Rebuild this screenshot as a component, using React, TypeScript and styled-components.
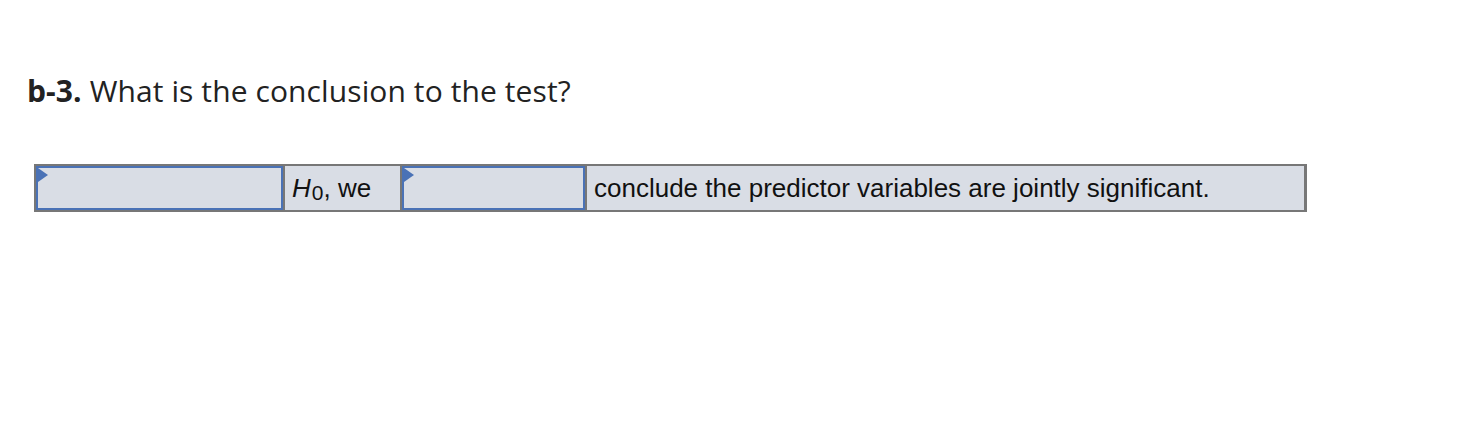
import React from "react";
import styled, { createGlobalStyle } from "styled-components";

const GlobalStyle = createGlobalStyle`
    html, body {
        margin: 0;
        padding: 0;
        background: #ffffff;
    }
`;

const Page = styled.div`
    padding: 73px 0 0 27px;
    font-family: "Open Sans", "Lato", sans-serif;
    color: #222222;
`;

const Question = styled.h2`
    margin: 0;
    font-size: 30px;
    font-weight: 400;
    line-height: 36px;
    letter-spacing: 0.1px;
`;

const Label = styled.strong`
    font-weight: 700;
`;

const Row = styled.div`
    display: flex;
    box-sizing: border-box;
    width: 1273px;
    height: 48px;
    margin: 55px 0 0 7px;
    border: 2px solid #777777;
    border-right-width: 3px;
    background: #d9dde5;
    font-family: "Liberation Sans", Arial, sans-serif;
    font-size: 26px;
    color: #111111;
`;

const SelectCell = styled.div<{ w: number }>`
    position: relative;
    box-sizing: border-box;
    width: ${({ w }) => w}px;
    flex: none;
    border: 2px solid #4a72b6;
    background: #d9dde5;

    &::before {
        content: "";
        position: absolute;
        left: 0;
        top: 0;
        width: 0;
        height: 0;
        border-top: 7px solid transparent;
        border-bottom: 7px solid transparent;
        border-left: 10px solid #4a72b6;
    }
`;

const TextCell = styled.div<{ w?: number }>`
    box-sizing: border-box;
    display: flex;
    align-items: center;
    padding: 0 0 0 7px;
    ${({ w }) => (w ? `width: ${w}px; flex: none;` : "flex: 1;")}
    border-left: 2px solid #777777;
    border-right: ${({ w }) => (w ? "2px solid #777777" : "none")};
    white-space: nowrap;
    line-height: 1;
`;

const Hyp = styled.span`
    font-style: italic;
`;

const Sub = styled.span`
    font-style: normal;
    font-size: 21px;
    position: relative;
    top: 4px;
    margin-left: 1px;
`;

export default function App() {
    return (
        <>
            <GlobalStyle />
            <Page>
                <Question>
                    <Label>b-3.</Label> What is the conclusion to the test?
                </Question>
                <Row>
                    <SelectCell w={247} />
                    <TextCell w={119}>
                        <Hyp>H</Hyp>
                        <Sub>0</Sub>, we
                    </TextCell>
                    <SelectCell w={183} />
                    <TextCell>conclude the predictor variables are jointly significant.</TextCell>
                </Row>
            </Page>
        </>
    );
}
